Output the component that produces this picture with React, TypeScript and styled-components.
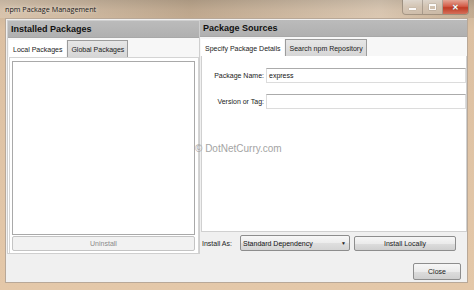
import styled, { createGlobalStyle } from 'styled-components';

const GlobalStyle = createGlobalStyle`
  html, body {
    margin: 0;
    padding: 0;
    width: 474px;
    height: 290px;
    overflow: hidden;
    font-family: "Liberation Sans", Arial, sans-serif;
  }
  * { box-sizing: border-box; }
`;

const App = () => {
  return (
    <Frame>
      <GlobalStyle />
      <TitleBar>
        <Title>npm Package Management</Title>
        <WinButtons>
          <WinButton><MinGlyph /></WinButton>
          <WinButton><MaxGlyph /></WinButton>
          <CloseWinButton>✕</CloseWinButton>
        </WinButtons>
      </TitleBar>

      <Client>
        <Columns>
          <LeftPanel>
            <Header>Installed Packages</Header>
            <TabStrip>
              <Tab active>Local Packages</Tab>
              <Tab>Global Packages</Tab>
            </TabStrip>
            <LeftBox>
              <ListBox />
              <Button disabled>Uninstall</Button>
            </LeftBox>
          </LeftPanel>

          <RightPanel>
            <Header>Package Sources</Header>
            <TabStrip>
              <Tab active>Specify Package Details</Tab>
              <Tab>Search npm Repository</Tab>
            </TabStrip>
            <RightBox>
              <Form>
                <Label>Package Name:</Label>
                <TextBox>express</TextBox>
                <Label>Version or Tag:</Label>
                <TextBox />
              </Form>
            </RightBox>
            <InstallRow>
              <SmallLabel>Install As:</SmallLabel>
              <Select>
                <span>Standard Dependency</span>
                <Arrow>▼</Arrow>
              </Select>
              <Button wide>Install Locally</Button>
            </InstallRow>
          </RightPanel>
        </Columns>

        <Footer>
          <Button close>Close</Button>
        </Footer>
      </Client>

      <Watermark>© DotNetCurry.com</Watermark>
    </Frame>
  );
};

export default App;

const Frame = styled.div`
  position: relative;
  width: 474px;
  height: 290px;
  display: flex;
  flex-direction: column;
  background:
    linear-gradient(180deg, #b9a68f 0px, #cdb69c 10px, #dcc0a2 30px, #e4c8a9 100%);
`;

const TitleBar = styled.div`
  height: 18px;
  display: flex;
  justify-content: space-between;
  padding-left: 5px;
  padding-right: 5px;
  background: linear-gradient(90deg, rgba(255,255,255,0.15), rgba(90,70,50,0.15) 40%, rgba(255,255,255,0.2) 80%, rgba(80,60,40,0.1));
`;

const Title = styled.div`
  font-family: "Open Sans", "Liberation Sans", sans-serif;
  font-size: 7.2px;
  line-height: 18px;
  color: #1a1a1a;
  text-shadow: 0 0 4px rgba(255,255,255,0.9);
`;

const WinButtons = styled.div`
  display: flex;
  height: 15px;
  border: 1px solid rgba(110,100,90,0.45);
  border-top: none;
  border-radius: 0 0 4px 4px;
  overflow: hidden;
`;

const WinButton = styled.div`
  width: 20px;
  height: 100%;
  display: flex;
  align-items: center;
  justify-content: center;
  background: linear-gradient(180deg, rgba(255,255,255,0.5), rgba(230,222,214,0.35) 50%, rgba(200,190,180,0.35));
  border-right: 1px solid rgba(110,100,90,0.4);
`;

const MinGlyph = styled.div`
  width: 7px;
  height: 2px;
  margin-top: 4px;
  background: rgba(255,255,255,0.9);
  box-shadow: 0 0 1px rgba(60,60,60,0.6);
`;

const MaxGlyph = styled.div`
  width: 7px;
  height: 6px;
  border: 1px solid rgba(255,255,255,0.9);
  border-top-width: 2px;
  box-shadow: 0 0 1px rgba(60,60,60,0.6);
`;

const CloseWinButton = styled.div`
  width: 25px;
  height: 100%;
  display: flex;
  align-items: center;
  justify-content: center;
  color: #fff;
  font-size: 8px;
  font-weight: bold;
  text-shadow: 0 0 1px #555;
  background: linear-gradient(180deg, #e4a595 0%, #d45c48 45%, #c03a24 55%, #d4705a 100%);
`;

const Client = styled.div`
  flex: 1;
  margin: 0 6px 7px 5px;
  background: #f0f0f0;
  border: 1px solid #b8a898;
  display: flex;
  flex-direction: column;
  padding: 1px 0 0 1px;
`;

const Columns = styled.div`
  display: grid;
  grid-template-columns: 193px 1fr;
  height: 234px;
`;

const LeftPanel = styled.div`
  display: flex;
  flex-direction: column;
  background: #fff;
  border: 1px solid #cfcfcf;
`;

const RightPanel = styled.div`
  display: flex;
  flex-direction: column;
`;

const Header = styled.div`
  height: 17px;
  flex: none;
  display: flex;
  align-items: center;
  padding-left: 3px;
  font-size: 9px;
  font-weight: bold;
  color: #111;
  background: linear-gradient(180deg, #bbbbbb, #b0b0b0);
  border-bottom: 1px solid #a8a8a8;
`;

const TabStrip = styled.div`
  height: 19px;
  flex: none;
  display: flex;
  align-items: flex-end;
  gap: 1px;
  padding-left: 1px;
  background: #f7f7f7;
`;

const Tab = styled.div<{ active?: boolean }>`
  height: 17px;
  display: flex;
  align-items: center;
  padding: 0 3px;
  font-size: 7px;
  color: #222;
  background: ${p => (p.active ? '#fff' : 'linear-gradient(180deg, #e6e6e6, #d6d6d6)')};
  border: 1px solid ${p => (p.active ? '#fff' : '#9c9c9c')};
  border-bottom: none;
`;

const LeftBox = styled.div`
  flex: 1;
  display: flex;
  flex-direction: column;
  gap: 1px;
  padding: 3px 3px 2px 2px;
  margin: 0 0 0 1px;
  border: 1px solid #d4d4d4;
  border-bottom: none;
`;

const ListBox = styled.div`
  flex: 1;
  background: #fff;
  border: 1px solid #a9a9a9;
`;

const Button = styled.div<{ wide?: boolean; close?: boolean; disabled?: boolean }>`
  height: ${p => (p.close ? '17px' : '15px')};
  width: ${p => (p.close ? '48px' : p.wide ? '102px' : 'auto')};
  flex: none;
  display: flex;
  align-items: center;
  justify-content: center;
  font-size: 7px;
  color: ${p => (p.disabled ? '#8a8a8a' : '#1a1a1a')};
  background: ${p => (p.disabled ? '#f2f2f2' : 'linear-gradient(180deg, #f6f6f6 0%, #ebebeb 50%, #dddddd 51%, #cfcfcf 100%)')};
  border: 1px solid ${p => (p.disabled ? '#c4c4c4' : '#8d8d8d')};
  border-radius: 2px;
`;

const RightBox = styled.div`
  flex: none;
  height: 176px;
  margin-left: 1px;
  background: #fff;
  border: 1px solid #d0d0d0;
  border-top: none;
  padding: 12px 0 0 0;
`;

const Form = styled.div`
  display: grid;
  grid-template-columns: 62px 1fr;
  column-gap: 2px;
  row-gap: 11px;
  align-items: center;
`;

const Label = styled.div`
  text-align: right;
  font-size: 7px;
  color: #222;
`;

const TextBox = styled.div`
  height: 15px;
  display: flex;
  align-items: center;
  padding-left: 2px;
  font-size: 7px;
  color: #111;
  background: #fff;
  border: 1px solid #dcdcdc;
  border-top-color: #ababab;
`;

const InstallRow = styled.div`
  flex: 1;
  display: flex;
  align-items: center;
  padding-left: 2px;
  gap: 3px;
`;

const SmallLabel = styled.div`
  font-size: 7px;
  color: #222;
  width: 35px;
`;

const Select = styled.div`
  width: 110px;
  height: 16px;
  margin-right: 1px;
  display: flex;
  align-items: center;
  justify-content: space-between;
  padding: 0 3px 0 2px;
  font-size: 7px;
  color: #111;
  background: linear-gradient(180deg, #f7f7f7 0%, #ececec 50%, #dfdfdf 51%, #d4d4d4 100%);
  border: 1px solid #8d8d8d;
  border-radius: 2px;
`;

const Arrow = styled.span`
  font-size: 5px;
  color: #222;
`;

const Footer = styled.div`
  flex: 1;
  display: flex;
  justify-content: flex-end;
  align-items: flex-start;
  padding: 9px 6px 0 0;
`;

const Watermark = styled.div`
  position: absolute;
  left: 195px;
  top: 143px;
  font-size: 10px;
  color: #a4a4a4;
  pointer-events: none;
`;
